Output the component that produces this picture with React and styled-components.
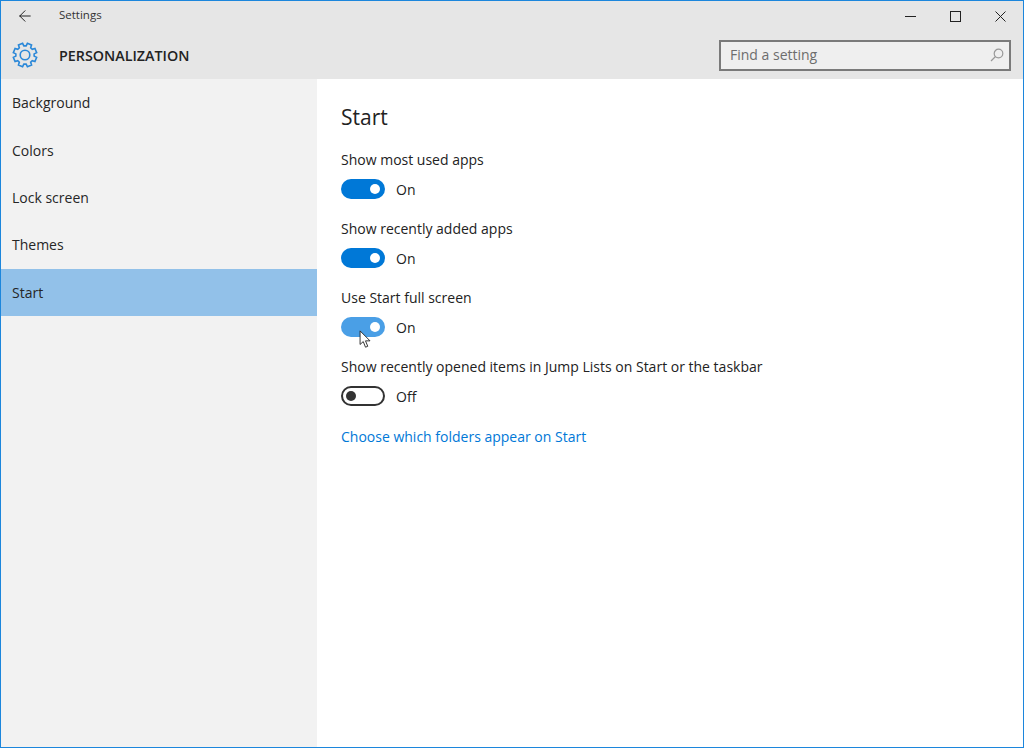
import React from 'react';
import styled, { createGlobalStyle } from 'styled-components';
import { ArrowLeft } from 'lucide-react';

const GlobalStyle = createGlobalStyle`
  html, body {
    margin: 0;
    padding: 0;
    background: #fff;
  }
  * {
    box-sizing: border-box;
  }
`;

const Window = styled.div`
  position: relative;
  display: flex;
  flex-direction: column;
  width: 1024px;
  height: 748px;
  border: 1px solid #1c86dc;
  font-family: "Open Sans", "Noto Sans", sans-serif;
  color: #1f1f1f;
  overflow: hidden;
`;

const Header = styled.header`
  flex: 0 0 78px;
  background: #e6e6e6;
  display: flex;
  flex-direction: column;
`;

const TitleBar = styled.div`
  display: flex;
  align-items: center;
  height: 30px;
`;

const BackButton = styled.div`
  width: 58px;
  padding-left: 15px;
  display: flex;
  align-items: center;
  color: #111;
`;

const WindowTitle = styled.span`
  font-size: 11.5px;
  line-height: 28px;
  height: 30px;
  color: #333;
`;

const WindowControls = styled.div`
  margin-left: auto;
  display: flex;
  align-items: center;
  color: #222;
`;

const ControlButton = styled.div`
  width: 45px;
  height: 30px;
  display: flex;
  align-items: center;
  justify-content: center;
`;

const HeaderRow = styled.div`
  flex: 1;
  display: flex;
  align-items: center;
  padding: 0 12px 0 11px;
`;

const GearSvg = styled.svg`
  width: 26px;
  height: 26px;
  margin-right: 21px;
  fill: none;
  stroke: #2b88d8;
  stroke-width: 1.6;
  stroke-linejoin: miter;
`;

const SectionName = styled.h1`
  margin: 0;
  font-size: 14.3px;
  font-weight: 600;
  color: #222;
`;

const SearchBox = styled.div`
  margin-left: auto;
  width: 292px;
  height: 31px;
  border: 2px solid #7a7a7a;
  background: #efefef;
  display: flex;
  align-items: center;
  justify-content: space-between;
  padding: 0 5px 1px 9px;
  font-size: 14px;
  color: #6d6d6d;
`;

const SearchSvg = styled.svg`
  width: 14px;
  height: 14px;
  fill: none;
  stroke: #999;
  stroke-width: 1.2;
`;

const Body = styled.div`
  flex: 1;
  display: flex;
  min-height: 0;
`;

const Sidebar = styled.nav`
  flex: 0 0 316px;
  background: #f2f2f2;
`;

const NavItem = styled.div`
  height: 47.4px;
  display: flex;
  align-items: center;
  padding-left: 11px;
  font-size: 14px;
  color: #262626;
  background: ${(p) => (p.$active ? '#92c1e9' : 'transparent')};
`;

const Content = styled.main`
  flex: 1;
  background: #fff;
  padding: 23px 24px;
`;

const PageTitle = styled.h2`
  margin: 0 0 18px;
  font-size: 21px;
  line-height: 30px;
  font-weight: 400;
  color: #222;
`;

const Setting = styled.div`
  margin-bottom: 20px;
`;

const SettingLabel = styled.div`
  font-size: 14px;
  line-height: 20px;
  color: #222;
  margin-bottom: 9px;
`;

const ToggleRow = styled.div`
  display: flex;
  align-items: center;
  gap: 11px;
  height: 20px;
  font-size: 14px;
  color: #222;
`;

const Toggle = styled.div`
  position: relative;
  width: 44px;
  height: 20px;
  border-radius: 10px;
  background: ${(p) => (!p.$on ? '#fff' : p.$hover ? '#4a9fe6' : '#0078d7')};
  border: ${(p) => (p.$on ? 'none' : '2px solid #333')};
  display: flex;
  align-items: center;
  justify-content: ${(p) => (p.$on ? 'flex-end' : 'flex-start')};
  padding: ${(p) => (p.$on ? '0 5px' : '0 3px')};

  &::after {
    content: '';
    width: 10px;
    height: 10px;
    border-radius: 50%;
    background: ${(p) => (p.$on ? '#fff' : '#333')};
  }
`;

const Pointer = styled.svg`
  position: absolute;
  left: 18px;
  top: 13px;
  width: 13px;
  height: 19px;
`;

const FolderLink = styled.a`
  display: block;
  margin-top: 21px;
  font-size: 14px;
  line-height: 20px;
  color: #0078d7;
  text-decoration: none;
`;

const navItems = ['Background', 'Colors', 'Lock screen', 'Themes', 'Start'];

const settings = [
  { label: 'Show most used apps', on: true },
  { label: 'Show recently added apps', on: true },
  { label: 'Use Start full screen', on: true, hover: true },
  { label: 'Show recently opened items in Jump Lists on Start or the taskbar', on: false },
];

// 8 tooth outline for the section gear
const gearPath = (() => {
  const pts = [];
  for (let i = 0; i < 8; i += 1) {
    const a = (i * Math.PI) / 4 + Math.PI / 8;
    pts.push([9.2, a - 0.27], [11.9, a - 0.19], [11.9, a + 0.19], [9.2, a + 0.27]);
  }
  return `${pts
    .map(([r, a], i) => `${i ? 'L' : 'M'}${(13 + r * Math.cos(a)).toFixed(2)} ${(13 + r * Math.sin(a)).toFixed(2)}`)
    .join(' ')} Z`;
})();

function App() {
  return (
    <Window>
      <GlobalStyle />
      <Header>
        <TitleBar>
          <BackButton>
            <ArrowLeft size={18} strokeWidth={1.2} />
          </BackButton>
          <WindowTitle>Settings</WindowTitle>
          <WindowControls>
            <ControlButton>
              <svg width="11" height="11" viewBox="0 0 11 11">
                <path d="M0 5.5H11" stroke="currentColor" strokeWidth="1" />
              </svg>
            </ControlButton>
            <ControlButton>
              <svg width="11" height="11" viewBox="0 0 11 11">
                <rect x="0.5" y="0.5" width="10" height="10" fill="none" stroke="currentColor" strokeWidth="1" />
              </svg>
            </ControlButton>
            <ControlButton>
              <svg width="11" height="11" viewBox="0 0 11 11">
                <path d="M0.5 0.5L10.5 10.5M10.5 0.5L0.5 10.5" stroke="currentColor" strokeWidth="1" />
              </svg>
            </ControlButton>
          </WindowControls>
        </TitleBar>
        <HeaderRow>
          <GearSvg viewBox="0 0 26 26">
            <path d={gearPath} />
            <circle cx="13" cy="13" r="4.8" />
          </GearSvg>
          <SectionName>PERSONALIZATION</SectionName>
          <SearchBox>
            <span>Find a setting</span>
            <SearchSvg viewBox="0 0 14 14">
              <circle cx="8.5" cy="5.5" r="4.3" />
              <path d="M5.5 8.5L1 13" />
            </SearchSvg>
          </SearchBox>
        </HeaderRow>
      </Header>
      <Body>
        <Sidebar>
          {navItems.map((item) => (
            <NavItem key={item} $active={item === 'Start'}>
              {item}
            </NavItem>
          ))}
        </Sidebar>
        <Content>
          <PageTitle>Start</PageTitle>
          {settings.map((s) => (
            <Setting key={s.label}>
              <SettingLabel>{s.label}</SettingLabel>
              <ToggleRow>
                <Toggle $on={s.on} $hover={s.hover}>
                  {s.hover && (
                    <Pointer viewBox="0 0 14 21">
                      <path
                        d="M1 1 L1 16 L4.5 12.8 L7 19 L9.5 18 L7 12 L12 12 Z"
                        fill="#fff"
                        stroke="#222"
                        strokeWidth="1"
                      />
                    </Pointer>
                  )}
                </Toggle>
                <span>{s.on ? 'On' : 'Off'}</span>
              </ToggleRow>
            </Setting>
          ))}
          <FolderLink>Choose which folders appear on Start</FolderLink>
        </Content>
      </Body>
    </Window>
  );
}

export default App;
